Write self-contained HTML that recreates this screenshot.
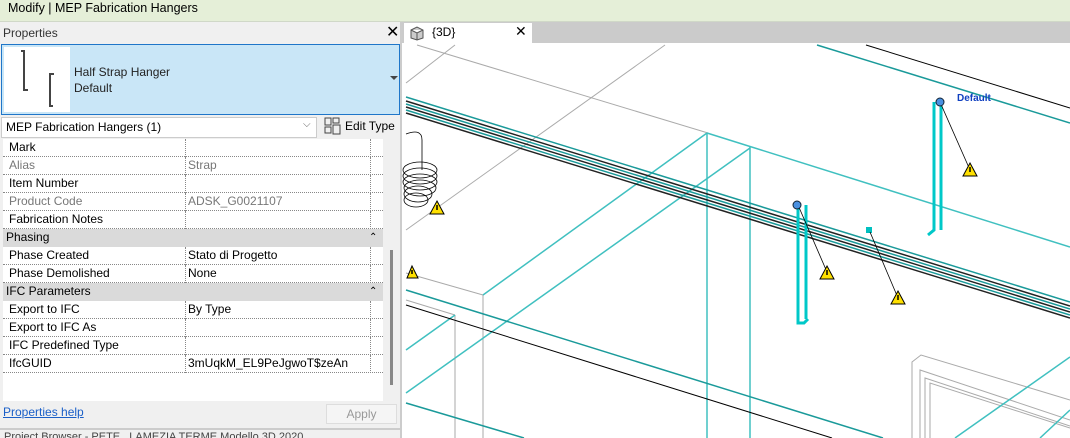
<!DOCTYPE html>
<html><head><meta charset="utf-8"><style>
*{margin:0;padding:0;box-sizing:border-box}
body{width:1070px;height:438px;overflow:hidden;background:#fff;font-family:"Segoe UI","Liberation Sans",sans-serif;font-size:12px;color:#000;position:relative}
.a{position:absolute}
.row{position:absolute;left:3px;width:380px;height:18px;border-bottom:1px dotted #888;line-height:17px}
.row span{position:absolute;left:6px}
.row b{font-weight:normal;position:absolute;left:185px}
.row i{position:absolute;left:182px;top:0;height:18px;border-left:1px dotted #888}
.row u{position:absolute;left:367px;top:0;height:18px;border-left:1px dotted #888}
.g{position:absolute;left:3px;width:380px;height:18px;background:#dadada;line-height:17px;padding-left:3px}
.gr{color:#777}
</style></head><body>
<div class="a" style="left:0;top:0;width:1070px;height:22px;background:#e5efd8;border-bottom:1px solid #d0d8c8;padding:1px 8px;font-size:12.5px">Modify | MEP Fabrication Hangers</div>
<div class="a" style="left:0;top:22px;width:402px;height:416px;background:#f0f0f0;border-right:2px solid #ccc"></div>
<div class="a" style="left:3px;top:26px;color:#333">Properties</div>
<div class="a" style="left:386px;top:22px;font-size:16px">✕</div>
<div class="a" style="left:1px;top:44px;width:399px;height:71px;background:#c9e6f7;border:1px solid #1f76c9"></div>
<div class="a" style="left:4px;top:47px;width:66px;height:65px;background:#fff"></div>
<svg class="a" style="left:4px;top:47px" width="66" height="65"><path d="M17 4h3v39h4M49 59h-3v-32h4" stroke="#444" stroke-width="2" fill="none"/></svg>
<div class="a" style="left:74px;top:65px;color:#222">Half Strap Hanger</div>
<div class="a" style="left:74px;top:81px;color:#222">Default</div>
<div class="a" style="left:390px;top:76px;border:4px solid transparent;border-top:4px solid #444"></div>
<div class="a" style="left:1px;top:117px;width:316px;height:21px;background:#fff;border:1px solid #ccc;padding:2px 4px">MEP Fabrication Hangers (1)</div>
<div class="a" style="left:303px;top:119px;color:#666;font-size:10px">⌵</div>
<svg class="a" style="left:324px;top:117px" width="18" height="18"><rect x="1" y="1" width="6" height="7" fill="none" stroke="#444"/><rect x="9" y="1" width="6" height="5" fill="none" stroke="#444"/><rect x="1" y="10" width="6" height="6" fill="none" stroke="#444"/><rect x="9" y="8" width="7" height="9" fill="none" stroke="#444"/></svg>
<div class="a" style="left:345px;top:119px">Edit Type</div>
<div class="a" style="left:3px;top:139px;width:380px;height:262px;background:#fff"></div>
<div class="row" style="top:139px"><span>Mark</span><i></i><u></u></div>
<div class="row gr" style="top:157px"><span>Alias</span><b>Strap</b><i></i><u></u></div>
<div class="row" style="top:175px"><span>Item Number</span><i></i><u></u></div>
<div class="row gr" style="top:193px"><span>Product Code</span><b>ADSK_G0021107</b><i></i><u></u></div>
<div class="row" style="top:211px"><span>Fabrication Notes</span><i></i><u></u></div>
<div class="g" style="top:229px">Phasing<span style="position:absolute;left:366px;font-size:10px">⌃</span></div>
<div class="row" style="top:247px"><span>Phase Created</span><b>Stato di Progetto</b><i></i><u></u></div>
<div class="row" style="top:265px"><span>Phase Demolished</span><b>None</b><i></i><u></u></div>
<div class="g" style="top:283px">IFC Parameters<span style="position:absolute;left:366px;font-size:10px">⌃</span></div>
<div class="row" style="top:301px"><span>Export to IFC</span><b>By Type</b><i></i><u></u></div>
<div class="row" style="top:319px"><span>Export to IFC As</span><i></i><u></u></div>
<div class="row" style="top:337px"><span>IFC Predefined Type</span><i></i><u></u></div>
<div class="row" style="top:355px"><span>IfcGUID</span><b>3mUqkM_EL9PeJgwoT$zeAn</b><i></i><u></u></div>
<div class="a" style="left:390px;top:250px;width:3px;height:135px;background:#888"></div>
<div class="a" style="left:3px;top:405px;color:#1a5fc8;text-decoration:underline">Properties help</div>
<div class="a" style="left:326px;top:404px;width:71px;height:20px;border:1px solid #ddd;background:#f5f5f5;color:#999;text-align:center;line-height:18px">Apply</div>
<div class="a" style="left:0;top:428px;width:402px;height:10px;border-top:2px solid #ccc;color:#444;font-size:11px;padding-left:4px;line-height:14px;overflow:hidden">Project Browser - PETE...LAMEZIA TERME Modello 3D 2020 ...</div>
<div class="a" style="left:402px;top:22px;width:668px;height:21px;background:#cbcbcb"></div>
<div class="a" style="left:404px;top:23px;width:128px;height:20px;background:#fff"></div>
<svg class="a" style="left:409px;top:25px" width="16" height="16"><path d="M2 5l6-3 6 3v8l-6 2-6-2z M2 5l6 3 6-3 M8 8v7" fill="#ccc" stroke="#555"/></svg>
<div class="a" style="left:432px;top:25px;font-size:12px">{3D}</div>
<div class="a" style="left:515px;top:23px;font-size:14px">✕</div>
<svg class="a" style="left:402px;top:43px" width="668" height="395" viewBox="402 43 668 395">
<g stroke="#aaa" stroke-width="1" fill="none">
<line x1="406" y1="83" x2="455" y2="45"/><line x1="406" y1="230" x2="665" y2="45"/><line x1="417" y1="45" x2="708" y2="133"/>
<line x1="406" y1="273" x2="483" y2="295"/><line x1="406" y1="300" x2="455" y2="315"/><line x1="455" y1="315" x2="455" y2="438"/><line x1="483" y1="295" x2="483" y2="438"/>
<path d="M912 438V362l9-7 149 45M920 438V370l150 50M925 438V378l145 48M930 438V383l140 45"/>
</g>
<g stroke="#40c0c0" stroke-width="1.5" fill="none">
<line x1="707" y1="133" x2="1070" y2="247"/><line x1="707" y1="133" x2="707" y2="438"/><line x1="750" y1="147" x2="750" y2="438"/>
<line x1="707" y1="133" x2="483" y2="295"/><line x1="750" y1="148" x2="406" y2="393"/>
<line x1="406" y1="350" x2="455" y2="315"/><line x1="1070" y1="357" x2="955" y2="438"/><line x1="1070" y1="410" x2="1040" y2="438"/>
</g>
<g stroke="#1a9a9a" stroke-width="1.5"><line x1="817" y1="45" x2="1070" y2="123"/><line x1="406" y1="290" x2="883" y2="438"/><line x1="406" y1="403" x2="524" y2="438"/></g>
<g stroke="#000" stroke-width="1"><line x1="866" y1="45" x2="1070" y2="108"/><line x1="406" y1="305" x2="832" y2="438"/></g>
<g stroke-width="1.5"><line x1="406" y1="97" x2="1070" y2="302" stroke="#1a9a9a"/><line x1="406" y1="101" x2="1070" y2="306" stroke="#222"/><line x1="406" y1="104" x2="1070" y2="309" stroke="#1a9a9a"/><line x1="406" y1="107" x2="1070" y2="312" stroke="#222"/><line x1="406" y1="110" x2="1070" y2="315" stroke="#1a9a9a"/><line x1="406" y1="113" x2="1070" y2="318" stroke="#222"/></g>
<g stroke="#00c8c8" stroke-width="3" fill="none"><path d="M798 205v118h6l4-4M806 205v114"/><path d="M934 102v128l-6 5M941 102v128"/></g>
<rect x="866" y="227" width="6" height="6" fill="#00c0c0"/>
<g stroke="#000" stroke-width="0.8" fill="none"><path d="M798 205L827 272M940 102L970 170M870 232L898 298"/>
<path d="M406 134q16-6 16 6v30"/>
<ellipse cx="420" cy="170" rx="17" ry="8"/><ellipse cx="420" cy="176" rx="17" ry="8"/><ellipse cx="420" cy="182" rx="17" ry="8"/><ellipse cx="420" cy="188" rx="16" ry="8"/><ellipse cx="418" cy="194" rx="14" ry="8"/><ellipse cx="416" cy="200" rx="12" ry="7"/></g>
<circle cx="797" cy="205" r="4" fill="#4a90e0" stroke="#123" stroke-width="1"/><circle cx="940" cy="102" r="4" fill="#4a90e0" stroke="#123" stroke-width="1"/>
<text x="957" y="101" font-family="Liberation Sans" font-size="10" font-weight="bold" fill="#1040c0">Default</text>
<g fill="#ffe000" stroke="#000" stroke-width="1">
<path d="M437 201l7 13h-14z"/><path d="M412 266l6 12h-11z"/><path d="M827 266l7 13h-14z"/><path d="M898 291l7 13h-14z"/><path d="M970 163l7 13h-14z"/></g>
<g stroke="#000" stroke-width="1.5"><path d="M437 205v5M412 270v4M827 270v5M898 295v5M970 167v5"/></g>
</svg>
</body></html>
